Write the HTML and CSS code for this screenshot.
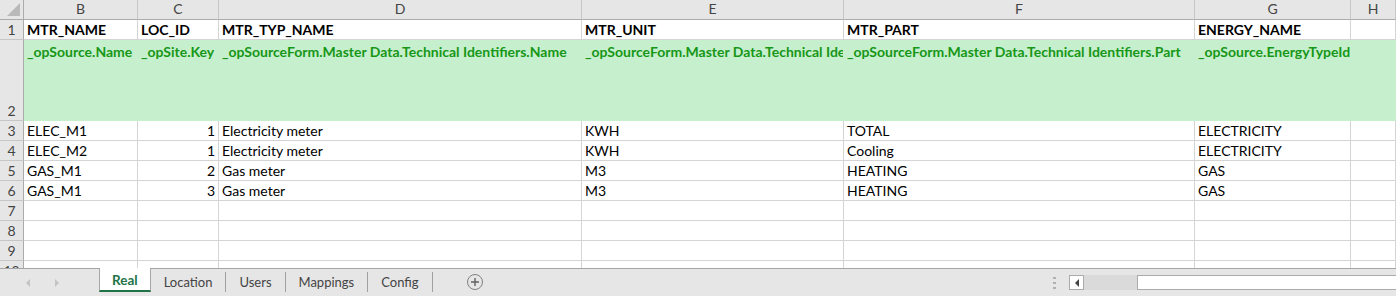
FILE: index.html
```html
<!DOCTYPE html>
<html lang="en">

<head>
 <meta charset="UTF-8">
 <meta name="viewport" content="width=device-width">
 <title>Real</title>

 <!-- Estilos -->
 <link rel="stylesheet" href="styles.css">
</head>

<body>

 <div class="sheet">
  <div class="corner"><span class="tri"></span></div>
  <div class="colhead">B</div>
  <div class="colhead">C</div>
  <div class="colhead">D</div>
  <div class="colhead">E</div>
  <div class="colhead">F</div>
  <div class="colhead">G</div>
  <div class="colhead">H</div>

  <div class="rowhead">1</div>
  <div class="cell bold">MTR_NAME</div>
  <div class="cell bold">LOC_ID</div>
  <div class="cell bold">MTR_TYP_NAME</div>
  <div class="cell bold">MTR_UNIT</div>
  <div class="cell bold">MTR_PART</div>
  <div class="cell bold">ENERGY_NAME</div>
  <div class="cell"></div>

  <div class="rowhead">2</div>
  <div class="cell map">_opSource.Name</div>
  <div class="cell map">_opSite.Key</div>
  <div class="cell map">_opSourceForm.Master Data.Technical Identifiers.Name</div>
  <div class="cell map">_opSourceForm.Master Data.Technical Identifiers.Unit</div>
  <div class="cell map">_opSourceForm.Master Data.Technical Identifiers.Part</div>
  <div class="cell map">_opSource.EnergyTypeId</div>
  <div class="cell map"></div>

  <div class="rowhead">3</div>
  <div class="cell">ELEC_M1</div>
  <div class="cell num">1</div>
  <div class="cell">Electricity meter</div>
  <div class="cell">KWH</div>
  <div class="cell">TOTAL</div>
  <div class="cell">ELECTRICITY</div>
  <div class="cell"></div>

  <div class="rowhead">4</div>
  <div class="cell">ELEC_M2</div>
  <div class="cell num">1</div>
  <div class="cell">Electricity meter</div>
  <div class="cell">KWH</div>
  <div class="cell">Cooling</div>
  <div class="cell">ELECTRICITY</div>
  <div class="cell"></div>

  <div class="rowhead">5</div>
  <div class="cell">GAS_M1</div>
  <div class="cell num">2</div>
  <div class="cell">Gas meter</div>
  <div class="cell">M3</div>
  <div class="cell">HEATING</div>
  <div class="cell">GAS</div>
  <div class="cell"></div>

  <div class="rowhead">6</div>
  <div class="cell">GAS_M1</div>
  <div class="cell num">3</div>
  <div class="cell">Gas meter</div>
  <div class="cell">M3</div>
  <div class="cell">HEATING</div>
  <div class="cell">GAS</div>
  <div class="cell"></div>

  <div class="rowhead">7</div>
  <div class="cell"></div><div class="cell"></div><div class="cell"></div><div class="cell"></div>
  <div class="cell"></div><div class="cell"></div><div class="cell"></div>

  <div class="rowhead">8</div>
  <div class="cell"></div><div class="cell"></div><div class="cell"></div><div class="cell"></div>
  <div class="cell"></div><div class="cell"></div><div class="cell"></div>

  <div class="rowhead">9</div>
  <div class="cell"></div><div class="cell"></div><div class="cell"></div><div class="cell"></div>
  <div class="cell"></div><div class="cell"></div><div class="cell"></div>

  <div class="rowhead">10</div>
  <div class="cell"></div><div class="cell"></div><div class="cell"></div><div class="cell"></div>
  <div class="cell"></div><div class="cell"></div><div class="cell"></div>
 </div>

 <div class="tabbar">
  <div class="nav">
   <svg width="6" height="8" viewBox="0 0 6 8"><polygon points="5,0 5,8 1,4" fill="#c4c4c4"/></svg>
   <svg width="6" height="8" viewBox="0 0 6 8"><polygon points="1,0 1,8 5,4" fill="#c4c4c4"/></svg>
  </div>
  <div class="tab active">Real</div>
  <div class="tab">Location</div>
  <div class="tab">Users</div>
  <div class="tab">Mappings</div>
  <div class="tab">Config</div>
  <svg class="add" width="18" height="18" viewBox="0 0 18 18">
   <circle cx="9" cy="9" r="7.5" fill="none" stroke="#808080" stroke-width="1"/>
   <path d="M9 5v8M5 9h8" stroke="#606060" stroke-width="1.4"/>
  </svg>
  <div class="hscroll">
   <svg class="dots" width="3" height="12" viewBox="0 0 3 12">
    <rect x="0" y="0" width="3" height="2" fill="#b0b0b0"/>
    <rect x="0" y="5" width="3" height="2" fill="#b0b0b0"/>
    <rect x="0" y="10" width="3" height="2" fill="#b0b0b0"/>
   </svg>
   <div class="sbtn">
    <svg width="6" height="8" viewBox="0 0 6 8"><polygon points="5,0 5,8 1,4" fill="#444"/></svg>
   </div>
   <div class="thumb"></div>
   <div class="track"></div>
  </div>
 </div>

</body>
</html>
```

FILE: styles.css
```css
body {
  margin: 0;
  font-family: Lato, "Liberation Sans", sans-serif;
  font-size: 14px;
  color: #000;
  background-color: white;
  width: 1396px;
  height: 296px;
  overflow: hidden;
}
.sheet {
  display: grid;
  grid-template-columns: 24px 114px 81px 363px 262px 351px 156px 45px;
  grid-template-rows: 20px 20px 81px repeat(8, 20px);
  height: 268px;
  overflow: hidden;
}
.sheet > div {
  box-sizing: border-box;
  border-right: 1px solid #d4d4d4;
  border-bottom: 1px solid #d4d4d4;
  white-space: nowrap;
  overflow: hidden;
  line-height: 18px;
}
.corner {
  background-color: #e6e6e6;
  position: relative;
  border-right-color: #ababab !important;
  border-bottom-color: #ababab !important;
}
.tri {
  position: absolute;
  right: 3px;
  bottom: 3px;
  width: 0;
  height: 0;
  border-left: 13px solid transparent;
  border-bottom: 13px solid #b9b9b9;
}
.colhead {
  background-color: #e6e6e6;
  color: #444;
  text-align: center;
  border-right-color: #c6c6c6 !important;
  border-bottom-color: #ababab !important;
}
.rowhead {
  background-color: #e6e6e6;
  color: #444;
  text-align: center;
  display: flex;
  align-items: flex-end;
  justify-content: center;
  border-right-color: #ababab !important;
  border-bottom-color: #c6c6c6 !important;
}
.cell {
  display: flex;
  align-items: flex-end;
  padding: 0 3px;
}
.bold {
  font-weight: bold;
}
.num {
  justify-content: flex-end;
}
.map {
  align-items: flex-start;
  padding-top: 3px;
  background-color: #c6efce;
  color: #179717;
  font-weight: bold;
  border-right-color: #c6efce !important;
  border-bottom-color: #c6efce !important;
}
.tabbar {
  display: flex;
  align-items: flex-start;
  height: 28px;
  box-sizing: border-box;
  background-color: #e6e6e6;
  border-top: 1px solid #a6a6a6;
  font-size: 13px;
  color: #444;
}
.nav {
  width: 99px;
  height: 27px;
  display: flex;
  align-items: center;
  gap: 23px;
  padding-left: 25px;
  box-sizing: border-box;
}
.tab {
  height: 20px;
  margin-top: 3px;
  padding: 0 13px;
  line-height: 20px;
  border-right: 1px solid #a0a0a0;
}
.tab.active {
  margin-top: -1px;
  height: 24px;
  box-sizing: border-box;
  padding: 3px 12px 0;
  line-height: 19px;
  background-color: white;
  border-left: 1px solid #a6a6a6;
  border-right: 1px solid #a6a6a6;
  border-bottom: 2px solid #217346;
  color: #217346;
  font-weight: bold;
  font-size: 13.5px;
}
.add {
  margin: 4px 0 0 33px;
}
.hscroll {
  margin-left: auto;
  width: 343px;
  height: 27px;
  display: flex;
  align-items: center;
}
.dots {
  margin-right: 13px;
}
.sbtn {
  width: 15px;
  height: 15px;
  box-sizing: border-box;
  border: 1px solid #ababab;
  background-color: white;
  display: flex;
  align-items: center;
  justify-content: center;
}
.thumb {
  width: 53px;
  height: 15px;
  background-color: #dadada;
}
.track {
  flex: 1;
  height: 15px;
  box-sizing: border-box;
  border: 1px solid #ababab;
  border-right: none;
  background-color: white;
}
```
